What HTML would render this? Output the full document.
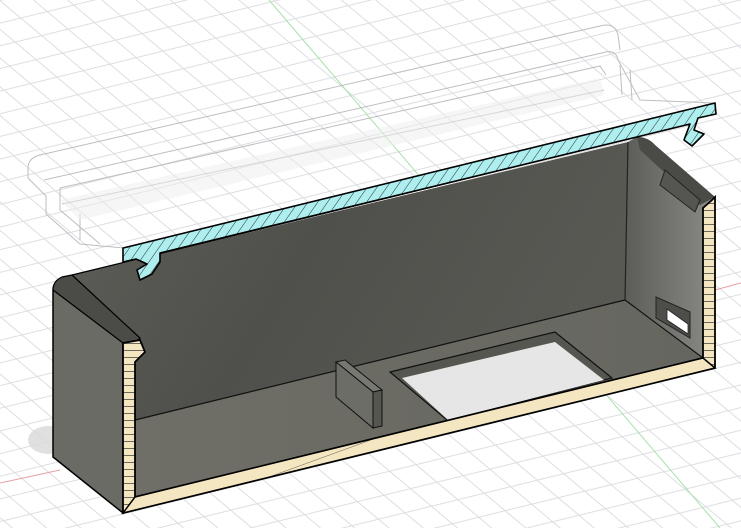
<!DOCTYPE html>
<html><head><meta charset="utf-8"><style>
html,body{margin:0;padding:0;background:#fff;width:741px;height:528px;overflow:hidden}
svg{display:block}
</style></head><body>
<svg width="741" height="528" viewBox="0 0 741 528" xmlns="http://www.w3.org/2000/svg">
<defs>
<pattern id="g1" width="22" height="22" patternUnits="userSpaceOnUse" patternTransform="rotate(-13.8)">
<line x1="0" y1="0.5" x2="22" y2="0.5" stroke="#dcdee2" stroke-width="1"/>
</pattern>
<pattern id="g2" width="22" height="22" patternUnits="userSpaceOnUse" patternTransform="rotate(40)">
<line x1="0" y1="0.5" x2="22" y2="0.5" stroke="#dcdee2" stroke-width="1"/>
</pattern>
<pattern id="hx" width="8" height="8" patternUnits="userSpaceOnUse" patternTransform="rotate(35)">
<rect width="8" height="8" fill="#aeeeee"/><line x1="0" y1="0" x2="0" y2="8" stroke="#000" stroke-width="0.8"/>
</pattern>
<pattern id="hy" width="7" height="7" patternUnits="userSpaceOnUse">
<rect width="7" height="7" fill="#f5e6c2"/><line x1="0" y1="0.5" x2="7" y2="0.5" stroke="#333" stroke-width="0.7"/>
</pattern>
<pattern id="hf" width="60" height="60" patternUnits="userSpaceOnUse" patternTransform="rotate(-20)">
<rect width="60" height="60" fill="#f5e6c2"/><line x1="0" y1="0" x2="60" y2="0" stroke="#333" stroke-width="0.7"/>
</pattern>
<linearGradient id="bw" x1="0" y1="0" x2="1" y2="0.3">
<stop offset="0" stop-color="#5e5f59"/><stop offset="0.5" stop-color="#4f504b"/><stop offset="1" stop-color="#585953"/>
</linearGradient>
<linearGradient id="fl" x1="0" y1="0" x2="1" y2="0">
<stop offset="0" stop-color="#6f6f67"/><stop offset="1" stop-color="#666660"/>
</linearGradient>
<linearGradient id="rw" x1="0" y1="0" x2="1" y2="0">
<stop offset="0" stop-color="#5c5d58"/><stop offset="1" stop-color="#8a8b86"/>
</linearGradient>
</defs>
<rect width="741" height="528" fill="#fff"/>
<rect width="741" height="528" fill="url(#g1)"/>
<rect width="741" height="528" fill="url(#g2)"/>
<line x1="269" y1="0" x2="720" y2="528" stroke="#a8e0a8" stroke-width="1"/>
<line x1="0" y1="483" x2="60" y2="470" stroke="#e8a0a0" stroke-width="1"/>
<line x1="715" y1="290" x2="741" y2="283" stroke="#e8a0a0" stroke-width="1"/>
<ellipse cx="48" cy="440" rx="20" ry="14" fill="#d8d8d8" opacity="0.8"/>
<!-- ghost lid -->
<g fill="none" stroke="#b8b8bc" stroke-width="1" opacity="0.9">
<path d="M28 168 Q28 158 40 155 L600 26 Q615 22 618 35 L620 50"/>
<path d="M28 168 L28 178 L46 196 L46 214 L80 244 L124 248"/>
<path d="M44 180 L606 52 Q616 50 618 60 L640 100 L715 103"/>
<path d="M60 188 L600 66 L606 75"/>
<path d="M60 188 L60 210 L100 244"/>
<path d="M62 204 L604 90"/>
<path d="M80 214 L80 240"/>
<path d="M620 65 L622 95 M630 70 L632 100"/>
</g>
<path d="M60 200 L600 78 L604 95 L80 220 Z" fill="#eeeeee" opacity="0.5"/>
<!-- left outer face -->
<path d="M53 290 Q53 282 62 278 L123 340 L123 513 L53 457 Z" fill="#6a6b65" stroke="#000" stroke-width="1.5"/>
<!-- back wall -->
<path d="M62 277 L628 142 L625 300 L135 420 L135 340 Z" fill="url(#bw)"/>
<!-- left wall top lip -->
<path d="M53 290 Q53 281 62 277 L72 275 L140 338 L135 343 L123 343 Z" fill="#4b4c47" stroke="#000" stroke-width="1.2" stroke-linejoin="round"/>
<line x1="72" y1="275" x2="637" y2="137" stroke="#000" stroke-width="1.2"/>
<!-- right wall -->
<path d="M628 142 L637 137 Q648 137 655 145 L715 197 L703 208 L703 358 L625 300 Z" fill="url(#rw)"/>
<path d="M637 137 Q648 137 655 145 L715 197 L700 205 L640 150 Z" fill="#4a4b46"/>
<line x1="628" y1="142" x2="625" y2="300" stroke="#222" stroke-width="1.2"/>
<path d="M665 170 L660 185 L695 212 L700 200 Z" fill="#55564f" stroke="#222" stroke-width="1"/>
<path d="M656 297 L656 318 L690 338 L690 312 Z" fill="#4d4e49" stroke="#222" stroke-width="1"/>
<path d="M667 309 L667 320 L688 334 L688 324 Z" fill="#fff" stroke="#222" stroke-width="0.8"/>
<!-- floor -->
<path d="M135 420 L625 300 L703 358 L135 497 Z" fill="url(#fl)"/>
<line x1="135" y1="420" x2="625" y2="300" stroke="#111" stroke-width="1.2"/>
<line x1="625" y1="300" x2="703" y2="358" stroke="#111" stroke-width="1.2"/>
<path d="M390 372 L555 332 L612 378 L447 420 Z" fill="#55564f" stroke="#111" stroke-width="1.2"/>
<path d="M402 378 L555 342 L604 380 L448 420 Z" fill="#e6e6e6"/>
<!-- block -->
<path d="M336 362 L345 360 L382 390 L373 392 Z" fill="#777871" stroke="#111" stroke-width="1"/>
<path d="M336 362 L373 392 L373 428 L336 397 Z" fill="#6c6d67" stroke="#111" stroke-width="1"/>
<path d="M373 392 L382 390 L382 426 L373 428 Z" fill="#55564f" stroke="#111" stroke-width="1"/>
<!-- cut sections -->
<path d="M123 343 L140 340 L145 352 L135 362 L135 497 L703 358 L703 208 L712 200 L715 197 L715 368 L123 513 Z" fill="url(#hy)" stroke="#000" stroke-width="1.8"/>
<path d="M135 497 L703 358 L715 368 L123 513 Z" fill="url(#hf)" stroke="#000" stroke-width="1.5"/>
<!-- lid section -->
<path d="M123 248 L715 103 L716 114 L698 118 L694 130 L704 134 L692 146 L684 140 L690 124 L160 253 L160 262 L152 274 L140 280 L137 270 L147 264 L136 259 L123 262 Z" fill="url(#hx)" stroke="#000" stroke-width="1.6" stroke-linejoin="round"/>
</svg>
</body></html>
